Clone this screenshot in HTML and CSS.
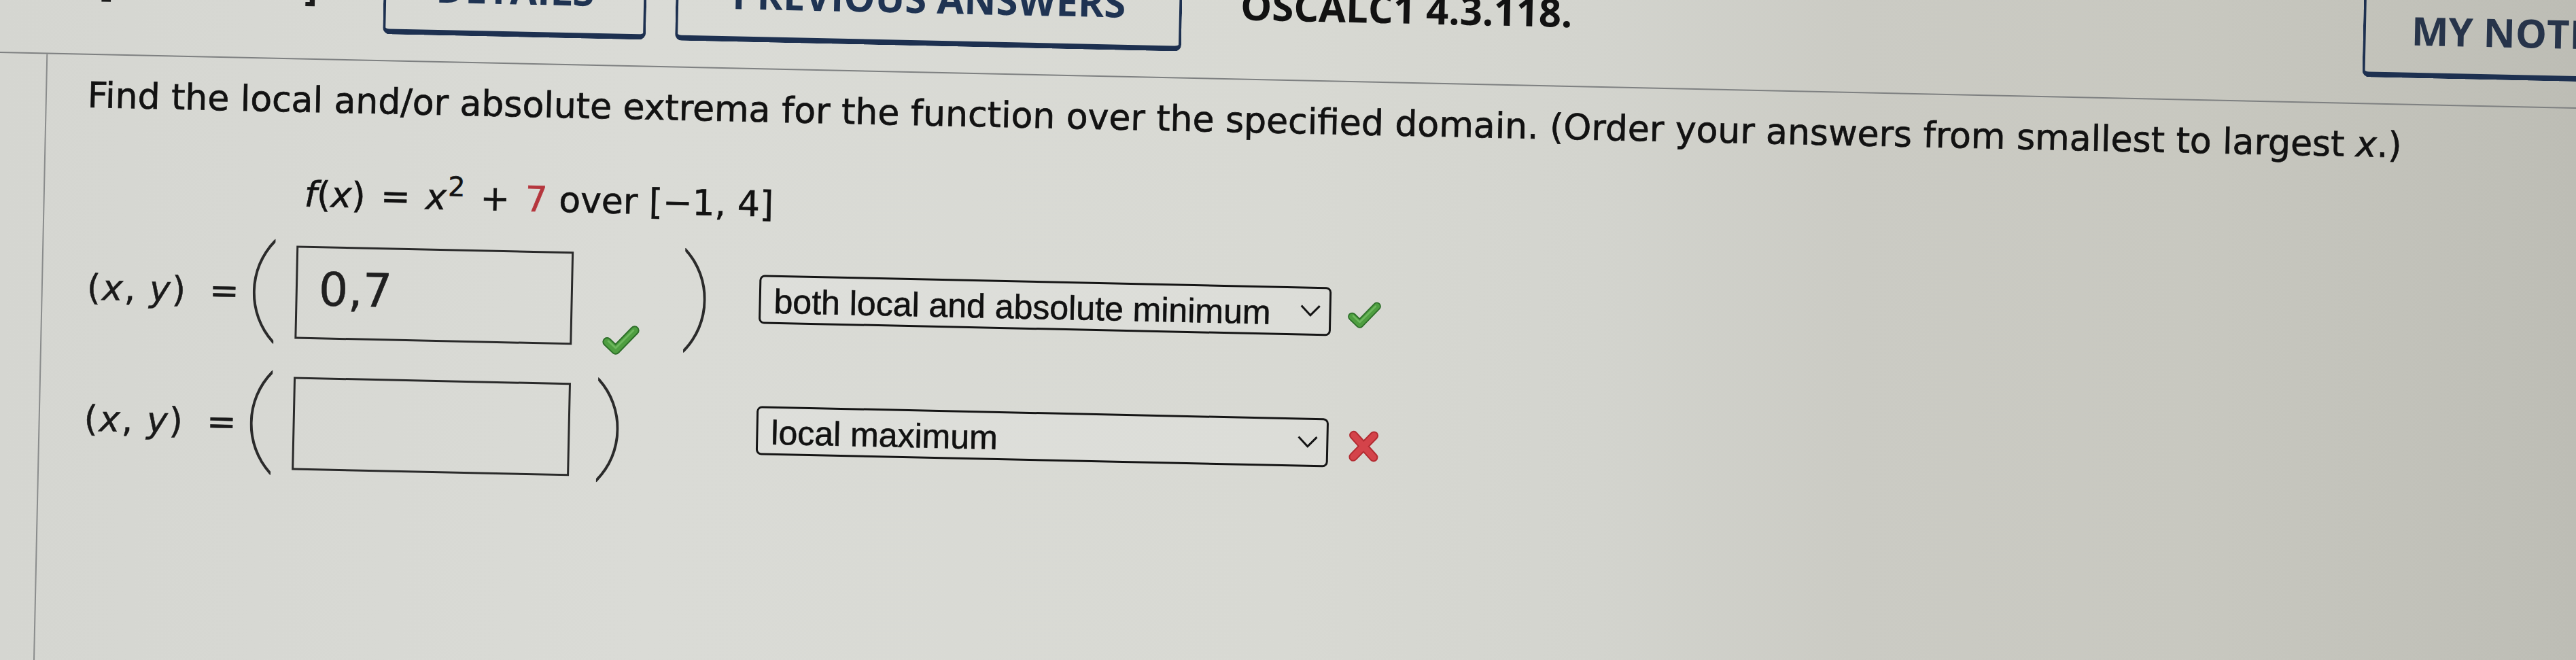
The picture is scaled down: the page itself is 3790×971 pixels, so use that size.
FILE: index.html
```html
<!DOCTYPE html>
<html lang="en">
<head>
<meta charset="utf-8">
<title>Find the local and/or absolute extrema</title>
<link rel="stylesheet" href="styles.css">
</head>
<body>
<div class="sheet">
  <header class="qbar">
    <span class="qnum">1. [–/1 Points]</span>
    <span class="qbtn qbtn-details"><span class="qbtn-label">DETAILS</span></span>
    <span class="qbtn qbtn-prev"><span class="qbtn-label">PREVIOUS ANSWERS</span></span>
    <span class="qref">OSCALC1 4.3.118.</span>
    <span class="qbtn qbtn-notes"><span class="qbtn-label">MY NOTES</span></span>
  </header>

  <section class="panel">
    <div class="content">
      <p class="prompt">Find the local and/or absolute extrema for the function over the specified domain. (Order your answers from smallest to largest <i>x</i>.)</p>
      <p class="formula"><i>f</i>(<i>x</i>) <span class="op">=</span> <i>x</i><sup>2</sup> <span class="op">+</span> <span class="red">7</span> over [−1, 4]</p>

      <div class="answer-row row-first">
        <div class="point-label"><span>(<i>x</i>, <i>y</i>)</span><span>=</span></div>
        <div class="point-group">
          <span class="paren paren-open"></span>
          <div class="field"><span class="field-value">0,7</span></div>
          <svg class="icon-check icon-check-field" viewBox="0 0 58 50" aria-label="correct">
            <path class="check-edge" d="M9 28 L22 40 L50 10"/>
            <path class="check-body" d="M9 28 L22 40 L50 10"/>
            <path class="check-shine" d="M11 27 L22 37 L48 10"/>
          </svg>
          <span class="paren paren-close paren-close-wide"></span>
        </div>
        <div class="select">
          <span class="select-text">both local and absolute minimum</span>
          <svg class="chevron" viewBox="0 0 31 18"><polyline points="2,2 15.5,16 29,2"/></svg>
        </div>
        <svg class="icon-check icon-check-select" viewBox="0 0 58 50" aria-label="correct">
          <path class="check-edge" d="M9 28 L22 40 L50 10"/>
          <path class="check-body" d="M9 28 L22 40 L50 10"/>
          <path class="check-shine" d="M11 27 L22 37 L48 10"/>
        </svg>
      </div>

      <div class="answer-row row-second">
        <div class="point-label"><span>(<i>x</i>, <i>y</i>)</span><span>=</span></div>
        <div class="point-group">
          <span class="paren paren-open"></span>
          <div class="field"><span class="field-value"></span></div>
          <span class="paren paren-close"></span>
        </div>
        <div class="select">
          <span class="select-text">local maximum</span>
          <svg class="chevron" viewBox="0 0 31 18"><polyline points="2,2 15.5,16 29,2"/></svg>
        </div>
        <svg class="icon-cross" viewBox="0 0 48 50" aria-label="incorrect">
          <path class="cross-edge" d="M9 9 L39 41 M39 9 L9 41"/>
          <path class="cross-body" d="M9 9 L39 41 M39 9 L9 41"/>
        </svg>
      </div>
    </div>
  </section>
</div>
</body>
</html>
```

FILE: styles.css
```css
html {
  margin: 0;
  height: 100%;
  overflow: hidden;
  background: linear-gradient(90deg, #d5d6d1 0%, #dadbd6 25%, #d8d9d3 50%, #d3d4ce 62%, #cbcbc4 72%, #c8c8c0 85%, #bdbdb5 100%);
}

body {
  margin: 0;
  height: 100%;
  overflow: hidden;
  font-family: "DejaVu Sans", Verdana, sans-serif;
  color: #121212;
}

.sheet {
  width: 3897px;
  transform: rotate(1.24deg);
  transform-origin: 0 0;
}

/* ---------- question header bar ---------- */
.qbar {
  height: 38px;
  display: flex;
  align-items: flex-end;
  font-family: "Open Sans", "DejaVu Sans", sans-serif;
  font-weight: 700;
  font-size: 58px;
  line-height: 1;
}

.qnum {
  width: 467px;
  text-align: right;
  padding-bottom: 41px;
  color: #1b1b1b;
  white-space: nowrap;
}

.qbtn {
  box-sizing: border-box;
  height: 220px;
  display: flex;
  align-items: flex-end;
  justify-content: center;
  padding-bottom: 33px;
  border: 4px solid #1d3050;
  border-top: none;
  border-bottom-width: 8px;
  border-radius: 0 0 10px 10px;
  color: #1f3352;
  white-space: nowrap;
}

.qbtn-details {
  width: 387px;
  margin-left: 97px;
}

.qbtn-prev {
  width: 745px;
  margin-left: 43px;
}

.qbtn-notes {
  width: 420px;
  margin-left: auto;
  justify-content: flex-start;
  padding-left: 67px;
  color: #27344a;
}

.qref {
  margin-left: 86px;
  padding-bottom: 41px;
  color: #121212;
  white-space: nowrap;
}

/* ---------- question panel ---------- */
.panel {
  margin-top: 38px;
  border-top: 2px solid #7e8081;
}

.content {
  margin-left: 70px;
  border-left: 2px solid #8a8c8c;
  min-height: 866px;
  padding: 29px 0 0 60px;
}

.prompt {
  margin: 0;
  font-size: 52px;
  line-height: 60px;
  white-space: nowrap;
  -webkit-text-stroke: 0.7px #121212;
}

.formula {
  margin: 79px 0 0 322px;
  font-size: 52px;
  line-height: 60px;
  white-space: nowrap;
  -webkit-text-stroke: 0.6px #121212;
}

.formula .op {
  margin: 0 6px;
}

.formula sup {
  font-size: 0.76em;
  line-height: 0;
  vertical-align: 0.5em;
  margin-left: 2px;
}

.red {
  color: #b5363d;
  -webkit-text-stroke: 0.6px #b5363d;
}

/* ---------- answer rows ---------- */
.answer-row {
  display: flex;
  align-items: center;
  height: 154px;
}

.row-first {
  margin-top: 37px;
}

.row-second {
  margin-top: 39px;
}

.point-label {
  box-sizing: border-box;
  width: 249px;
  padding: 0 18px 0 5px;
  display: flex;
  justify-content: space-between;
  font-size: 52px;
  letter-spacing: 2px;
  line-height: 60px;
  color: #1a1a1a;
  white-space: nowrap;
  -webkit-text-stroke: 0.5px #1a1a1a;
}

.point-group {
  width: 745px;
  height: 154px;
  display: flex;
  align-items: center;
}

.paren {
  display: block;
  flex: none;
  width: 32px;
  height: 154px;
  overflow: hidden;
}

.paren::before {
  content: "";
  display: block;
  box-sizing: border-box;
  width: 200px;
  height: 212px;
  margin-top: -29px;
  border: 4px solid #2b2b2b;
  border-radius: 50%;
}

.paren-close::before {
  margin-left: -168px;
}

.paren-close {
  margin-left: 40px;
}

.paren-close-wide {
  margin-left: 64px;
}

.field {
  box-sizing: border-box;
  flex: none;
  width: 408px;
  height: 137px;
  margin-left: 31px;
  border: 3px solid #2a2a2a;
  display: flex;
  align-items: center;
  padding: 0 0 8px 31px;
}

.field-value {
  font-size: 68px;
  line-height: 1;
  color: #202020;
  -webkit-text-stroke: 0.5px #202020;
}

.icon-check {
  flex: none;
  width: 57px;
  height: 49px;
  fill: none;
  stroke-linecap: round;
  stroke-linejoin: round;
}

.check-edge {
  stroke: #2d6e29;
  stroke-width: 14;
}

.check-body {
  stroke: #4e9e40;
  stroke-width: 10;
}

.check-shine {
  stroke: #74bd63;
  stroke-width: 3;
  opacity: 0.8;
}

.icon-check-field {
  align-self: flex-end;
  margin: 0 0 -8px 43px;
}

.icon-check-select {
  margin: 0 0 0 23px;
  width: 51px;
  height: 48px;
}

.select {
  box-sizing: border-box;
  flex: none;
  width: 842px;
  height: 72px;
  margin-bottom: 8px;
  border: 3px solid #151515;
  border-radius: 8px;
  background: rgba(255, 255, 255, 0.12);
  display: flex;
  align-items: center;
  justify-content: space-between;
  padding: 6px 12px 0 19px;
  font-family: "Liberation Sans", Arial, sans-serif;
  font-size: 50px;
  color: #111;
  white-space: nowrap;
  -webkit-text-stroke: 0.6px #111;
}

.chevron {
  width: 31px;
  height: 18px;
  fill: none;
  stroke: #151515;
  stroke-width: 3;
  margin-bottom: 8px;
}

.icon-cross {
  flex: none;
  width: 48px;
  height: 50px;
  margin-left: 28px;
  fill: none;
  stroke-linecap: round;
}

.cross-edge {
  stroke: #b32c32;
  stroke-width: 13;
}

.cross-body {
  stroke: #d4434a;
  stroke-width: 9;
}
```
